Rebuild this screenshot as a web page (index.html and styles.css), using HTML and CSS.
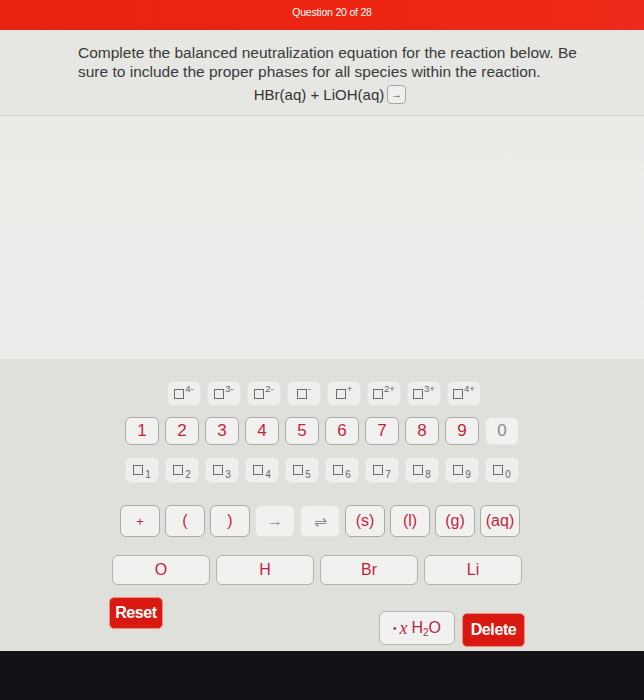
FILE: index.html
```html
<!DOCTYPE html>
<html>
<head>
<meta charset="utf-8">
<link rel="stylesheet" href="styles.css">
</head>
<body>
<div class="page">
  <header class="topbar"><span class="qnum">Question 20 of 28</span></header>
  <section class="question">
    <p class="prompt">Complete the balanced neutralization equation for the reaction below. Be sure to include the proper phases for all species within the reaction.</p>
    <div class="equation"><span>HBr(aq) + LiOH(aq)</span><span class="answer-box">&rarr;</span></div>
  </section>
  <section class="blank"></section>
  <section class="keyboard">
    <div class="row charges">
      <div class="key soft"><i class="sq"></i><sup>4-</sup></div>
      <div class="key soft"><i class="sq"></i><sup>3-</sup></div>
      <div class="key soft"><i class="sq"></i><sup>2-</sup></div>
      <div class="key soft"><i class="sq"></i><sup>-</sup></div>
      <div class="key soft"><i class="sq"></i><sup>+</sup></div>
      <div class="key soft"><i class="sq"></i><sup>2+</sup></div>
      <div class="key soft"><i class="sq"></i><sup>3+</sup></div>
      <div class="key soft"><i class="sq"></i><sup>4+</sup></div>
    </div>
    <div class="row numbers">
      <div class="key num">1</div>
      <div class="key num">2</div>
      <div class="key num">3</div>
      <div class="key num">4</div>
      <div class="key num">5</div>
      <div class="key num">6</div>
      <div class="key num">7</div>
      <div class="key num">8</div>
      <div class="key num">9</div>
      <div class="key num off">0</div>
    </div>
    <div class="row subs">
      <div class="key soft"><i class="sq"></i><sub>1</sub></div>
      <div class="key soft"><i class="sq"></i><sub>2</sub></div>
      <div class="key soft"><i class="sq"></i><sub>3</sub></div>
      <div class="key soft"><i class="sq"></i><sub>4</sub></div>
      <div class="key soft"><i class="sq"></i><sub>5</sub></div>
      <div class="key soft"><i class="sq"></i><sub>6</sub></div>
      <div class="key soft"><i class="sq"></i><sub>7</sub></div>
      <div class="key soft"><i class="sq"></i><sub>8</sub></div>
      <div class="key soft"><i class="sq"></i><sub>9</sub></div>
      <div class="key soft"><i class="sq"></i><sub>0</sub></div>
    </div>
    <div class="row symbols">
      <div class="key sym small">+</div>
      <div class="key sym">(</div>
      <div class="key sym">)</div>
      <div class="key sym off">&rarr;</div>
      <div class="key sym off">&#8652;</div>
      <div class="key sym">(s)</div>
      <div class="key sym">(l)</div>
      <div class="key sym">(g)</div>
      <div class="key sym">(aq)</div>
    </div>
    <div class="row elements">
      <div class="key el">O</div>
      <div class="key el">H</div>
      <div class="key el">Br</div>
      <div class="key el">Li</div>
    </div>
    <div class="row actions">
      <div class="btn red">Reset</div>
      <div class="right">
        <div class="key water"><span class="dot">&bull;</span><span class="x">x</span> H<sub>2</sub>O</div>
        <div class="btn red">Delete</div>
      </div>
    </div>
  </section>
  <footer class="dark"></footer>
</div>
</body>
</html>
```
FILE: styles.css
```css
html, body {
  margin: 0;
  padding: 0;
}
body {
  width: 644px;
  height: 700px;
  overflow: hidden;
  background: #111114;
  font-family: "Liberation Sans", Arial, sans-serif;
}
.page {
  display: flex;
  flex-direction: column;
  height: 700px;
}
.topbar {
  height: 30px;
  background: linear-gradient(90deg, #e8220f 0%, #ec2612 60%, #ee2a1a 100%);
  display: flex;
  align-items: center;
  justify-content: center;
  padding-left: 20px;
  box-sizing: border-box;
}
.qnum {
  color: #ffffff;
  font-size: 10.5px;
  letter-spacing: -0.2px;
  margin-bottom: 6px;
}
.question {
  background: #e6e6e3;
  padding: 13px 0 0 0;
  height: 86px;
  box-sizing: border-box;
  border-bottom: 1px solid #d2d2ce;
}
.prompt {
  margin: 0 0 0 78px;
  width: 520px;
  font-size: 15.5px;
  line-height: 19px;
  color: #3a3a3a;
}
.equation {
  display: flex;
  justify-content: center;
  align-items: center;
  gap: 3px;
  margin-top: 4px;
  padding-left: 16px;
  font-size: 15px;
  color: #333333;
}
.answer-box {
  width: 17px;
  height: 17px;
  border: 1px solid #a6a6a2;
  border-radius: 4px;
  font-size: 11px;
  line-height: 17px;
  text-align: center;
  color: #555;
  background: #efefed;
}
.blank {
  height: 243px;
  background: linear-gradient(180deg, #ebebe8 0%, #ededeb 100%);
}
.keyboard {
  background: #dfdfdc;
  height: 292px;
  padding-top: 22px;
  box-sizing: border-box;
  display: flex;
  flex-direction: column;
  align-items: center;
}
.row {
  display: flex;
  gap: 6px;
}
.key {
  box-sizing: border-box;
  background: #f1f1ef;
  border-radius: 6px;
  display: flex;
  align-items: center;
  justify-content: center;
  color: #c41f3f;
  font-family: "Liberation Sans", Arial, sans-serif;
}
.soft {
  width: 34px;
  height: 25px;
  border: 1px solid #e4e4e1;
  background: #eeeeec;
  color: #666;
}
.charges {
  margin-left: 4px;
}
.subs .soft {
  height: 26px;
}
.sq {
  display: inline-block;
  width: 10px;
  height: 10px;
  border: 1px solid #6c6c6c;
  box-sizing: border-box;
}
.soft sup {
  font-size: 9.5px;
  line-height: 1;
  margin-left: 1px;
  position: relative;
  top: -5px;
  vertical-align: baseline;
}
.soft sub {
  font-size: 10px;
  line-height: 1;
  margin-left: 2px;
  position: relative;
  top: 5px;
  vertical-align: baseline;
}
.numbers {
  margin-top: 11px;
}
.num {
  width: 34px;
  height: 28px;
  border: 1.5px solid #aaaaa6;
  font-size: 17px;
}
.num.off {
  border: 1px solid #e2e2df;
  color: #8a8a8a;
}
.subs {
  margin-top: 12px;
}
.symbols {
  margin-top: 22px;
  gap: 5px;
  margin-left: -4px;
}
.sym {
  width: 40px;
  height: 32px;
  border: 1.5px solid #aaaaa6;
  font-size: 16px;
}
.sym.small {
  font-size: 13px;
}
.sym.off {
  border: 1px solid #e2e2df;
  color: #8e8e8e;
}
.elements {
  margin-top: 18px;
  margin-left: -10px;
}
.el {
  width: 98px;
  height: 30px;
  border: 1.5px solid #b2b2ae;
  font-size: 16px;
}
.actions {
  margin-top: 12px;
  width: 416px;
  margin-left: -10px;
  justify-content: space-between;
  align-items: flex-start;
}
.right {
  display: flex;
  gap: 7px;
  margin-top: 14px;
}
.btn {
  box-sizing: border-box;
  border-radius: 5px;
  display: flex;
  align-items: center;
  justify-content: center;
  font-weight: bold;
  font-size: 16px;
  color: #ffffff;
  letter-spacing: -0.4px;
}
.red {
  background: #d9190f;
  border: 1.5px solid #ef8f86;
  height: 32px;
  padding: 0 4px;
}
.right .red {
  width: 63px;
  height: 34px;
  margin-top: 2px;
}
.actions > .red {
  width: 54px;
}
.water {
  width: 76px;
  height: 34px;
  border: 1.5px solid #b5b5b1;
  font-size: 16px;
  color: #b2274a;
}
.water .dot {
  font-size: 10px;
  margin-right: 3px;
}
.water .x {
  font-family: "Liberation Serif", serif;
  font-style: italic;
  font-size: 18px;
  margin-right: 4px;
}
.water sub {
  font-size: 10px;
  position: relative;
  top: 4px;
  vertical-align: baseline;
}
.dark {
  flex: 1;
  background: #121216;
}
```
